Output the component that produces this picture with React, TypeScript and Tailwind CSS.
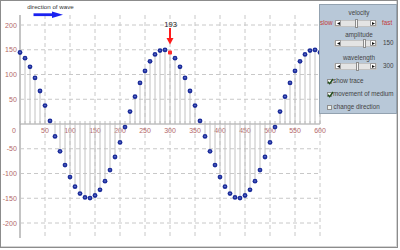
import React from "react";

const PX0 = 20;
const AXIS_Y = 124;
const SY = 0.495;

function yOf(v: number) {
  return AXIS_Y - v * SY;
}

function Slider({ thumb }: { thumb: number }) {
  return (
    <div className="relative flex h-[7px] w-[43px] items-center justify-between rounded-[1px] border border-[#c2c2c2] bg-[#e4e4e4]">
      <div className="flex h-[6px] w-[6px] items-center justify-center border border-[#9c9c9c] bg-white">
        <svg width="3" height="3" viewBox="0 0 3 3">
          <polygon points="0,1.5 3,0 3,3" fill="#111" />
        </svg>
      </div>
      <div className="flex h-[6px] w-[6px] items-center justify-center border border-[#9c9c9c] bg-white">
        <svg width="3" height="3" viewBox="0 0 3 3">
          <polygon points="3,1.5 0,0 0,3" fill="#111" />
        </svg>
      </div>
      <div
        className="absolute top-[-2px] h-[9px] w-[3px] border border-[#8c8c8c] bg-[#f6f6f6]"
        style={{ left: thumb }}
      />
    </div>
  );
}

function Check({ checked }: { checked: boolean }) {
  return (
    <div className="relative h-[5px] w-[5px] border border-[#8e8e8e] bg-[#eef2ee]">
      {checked && (
        <svg
          className="absolute left-[-1px] top-[-2px]"
          width="7"
          height="7"
          viewBox="0 0 7 7"
        >
          <polyline
            points="1,3.8 2.6,5.6 6,1"
            fill="none"
            stroke="#1d4d1d"
            strokeWidth="1.3"
          />
        </svg>
      )}
    </div>
  );
}

export default function App() {
  const dots: { u: number; cx: number; cy: number }[] = [];
  for (let u = 0; u <= 600; u += 10) {
    const v = 150 * Math.cos((2 * Math.PI * (u - 287)) / 300);
    dots.push({ u, cx: PX0 + u / 2, cy: yOf(v) });
  }
  const gridY = [200, 150, 100, 50, -50, -100, -150, -200];
  const gridX = [50, 100, 150, 200, 250, 300, 350, 400, 450, 500, 550, 600];
  const ticks: number[] = [];
  for (let u = 0; u <= 600; u += 10) ticks.push(u);

  return (
    <div
      className="relative h-[250px] w-[400px] overflow-hidden bg-white"
      style={{ fontFamily: '"Liberation Sans", Arial, sans-serif' }}
    >
      <div className="relative h-[248px] w-[398px] border border-[#8c8c8c] bg-white shadow-[inset_-1px_-1px_0_#d4d4d4]">
        <svg
          width="396"
          height="246"
          viewBox="1 1 396 246"
          className="block"
          style={{ fontFamily: '"Liberation Sans", Arial, sans-serif' }}
        >
          {gridY.map((g) => (
            <line
              key={"gy" + g}
              x1={20}
              x2={320}
              y1={yOf(g)}
              y2={yOf(g)}
              stroke="#c8c8c8"
              strokeWidth={1}
              strokeDasharray="4 3"
            />
          ))}
          {gridX.map((g) => (
            <line
              key={"gx" + g}
              x1={PX0 + g / 2}
              x2={PX0 + g / 2}
              y1={15}
              y2={238}
              stroke="#c8c8c8"
              strokeWidth={1}
              strokeDasharray="4 3"
            />
          ))}
          <line x1={20} x2={20} y1={15} y2={238} stroke="#c4c4c4" strokeWidth={2} />
          <line x1={20} x2={320} y1={AXIS_Y} y2={AXIS_Y} stroke="#a0a0a0" strokeWidth={1} />
          {ticks.map((u) => (
            <line
              key={"t" + u}
              x1={PX0 + u / 2}
              x2={PX0 + u / 2}
              y1={AXIS_Y - 3}
              y2={AXIS_Y}
              stroke="#b0b0b0"
              strokeWidth={0.8}
            />
          ))}
          {[200, 150, 100, 50, -50, -100, -150, -200].map((g) => (
            <text
              key={"yl" + g}
              x={16.8}
              y={yOf(g) + 2.6}
              fontSize={7}
              fill="#b36868"
              textAnchor="end"
            >
              {g}
            </text>
          ))}
          <text x={14} y={132.6} fontSize={7} fill="#b36868" textAnchor="middle">
            0
          </text>
          {gridX.map((g) => (
            <text
              key={"xl" + g}
              x={PX0 + g / 2}
              y={132.6}
              fontSize={7}
              fill="#b36868"
              textAnchor="middle"
            >
              {g}
            </text>
          ))}
          {dots.map((d) => (
            <line
              key={"s" + d.u}
              x1={d.cx}
              x2={d.cx}
              y1={AXIS_Y}
              y2={d.cy}
              stroke="#c2c2c2"
              strokeWidth={1}
            />
          ))}
          {dots.map((d) =>
            d.u === 300 ? (
              <rect
                key={"d" + d.u}
                x={d.cx - 2}
                y={d.cy - 2}
                width={4}
                height={4}
                rx={0.8}
                fill="#ff2b2b"
              />
            ) : (
              <g key={"d" + d.u}>
                <circle cx={d.cx} cy={d.cy} r={2.4} fill="#1b2c9a" />
                <circle cx={d.cx} cy={d.cy - 0.2} r={0.7} fill="#8090e0" />
              </g>
            )
          )}
          <text x={27.3} y={9} fontSize={6.2} fill="#333">
            direction of wave
          </text>
          <line x1={33.5} x2={55} y1={14.7} y2={14.7} stroke="#1a22f0" strokeWidth={2.8} />
          <polygon points="52,11.5 63,14.7 52,17.9" fill="#1a22f0" />
          <text x={170.7} y={26.6} fontSize={7.6} fill="#222" textAnchor="middle">
            193
          </text>
          <line x1={170} x2={170} y1={28} y2={39} stroke="#ff1a1a" strokeWidth={2} />
          <polygon points="166.5,38 173.5,38 170,44.5" fill="#ff1a1a" />
        </svg>

        <div className="absolute left-[318px] top-[3px] flex h-[110px] w-[78px] flex-col border border-[#93a2b0] bg-[#b8c8d8] text-[6.3px] leading-none text-[#444]">
          <div className="mt-[4px] flex h-[8px] items-center justify-center pl-[2px]">velocity</div>
          <div className="mt-[2px] flex h-[8px] items-center">
            <div className="w-[14px] text-[#c23a3a]">slow</div>
            <Slider thumb={20} />
            <div className="ml-[5px] text-[#c23a3a]">fast</div>
          </div>
          <div className="mt-[4px] flex h-[8px] items-center justify-center pl-[2px]">amplitude</div>
          <div className="mt-0 flex h-[8px] items-center">
            <div className="w-[14px]" />
            <Slider thumb={28} />
            <div className="ml-[6px]">150</div>
          </div>
          <div className="mt-[7px] flex h-[8px] items-center justify-center pl-[2px]">wavelength</div>
          <div className="mt-0 flex h-[8px] items-center">
            <div className="w-[14px]" />
            <Slider thumb={21} />
            <div className="ml-[6px]">300</div>
          </div>
          <div className="mt-[7px] flex h-[9px] items-center pl-[6.5px]">
            <Check checked={true} />
            <span className="ml-[1.5px]">show trace</span>
          </div>
          <div className="mt-[4px] flex h-[9px] items-center pl-[6.5px]">
            <Check checked={true} />
            <span className="ml-[1.5px]">movement of medium</span>
          </div>
          <div className="mt-[3.5px] flex h-[9px] items-center pl-[6.5px]">
            <Check checked={false} />
            <span className="ml-[2px]">change direction</span>
          </div>
        </div>
      </div>
    </div>
  );
}
